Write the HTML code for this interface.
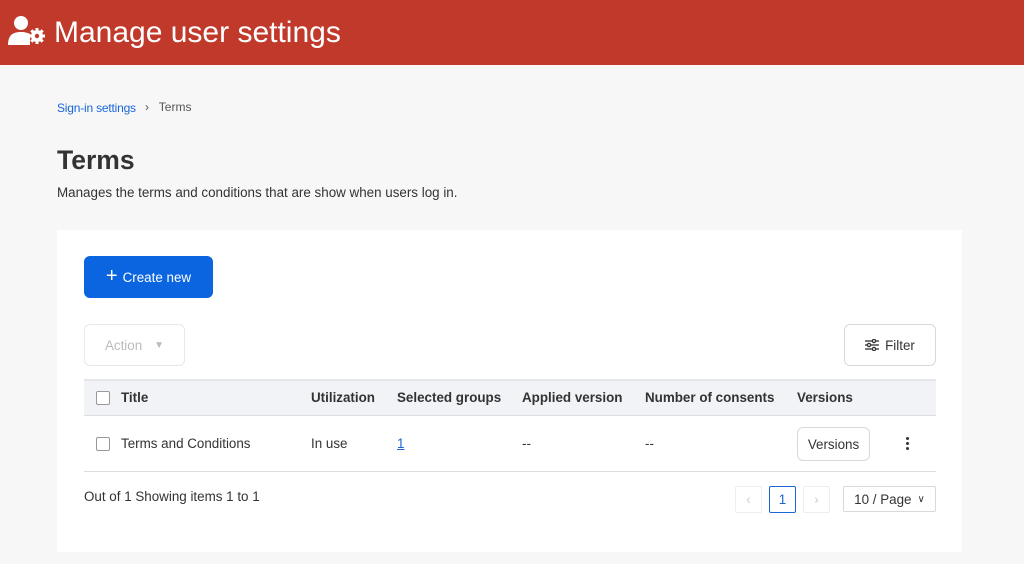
<!DOCTYPE html>
<html><head><style>
*{box-sizing:border-box;margin:0;padding:0}
body{width:1024px;height:564px;overflow:hidden;background:#f7f7f7;font-family:"Liberation Sans",Arial,sans-serif;color:#333;position:relative;font-size:13.4px}
.hdr{position:absolute;left:0;top:0;width:1024px;height:65px;background:#c0392b;color:#fff}
.hdr .t{position:absolute;left:54px;top:16px;font-size:30px}
.a{position:absolute;white-space:nowrap}
.card{position:absolute;left:57px;top:230px;width:905px;height:322px;background:#fff}
.btn{position:absolute;border:1px solid #d9d9d9;border-radius:6px;background:#fff;font-size:13.4px;display:flex;align-items:center;justify-content:center}
.cb{position:absolute;width:14px;height:14px;border:1px solid #999;border-radius:2px;background:#fff}
.h{font-weight:bold;font-size:13.4px;color:#333}
</style></head><body>
<div class="hdr">
<svg style="position:absolute;left:8px;top:15px" width="40" height="32" viewBox="0 0 40 32" fill="#fff">
<circle cx="13" cy="8" r="7"/><path d="M0 30 C0 20 5 17 13 17 C17 17 20 18 22 19 L22 30 Z"/>
<g transform="translate(29,21)"><circle r="6"/><g stroke="#fff" stroke-width="3"><line x1="0" y1="-8" x2="0" y2="8"/><line x1="-8" y1="0" x2="8" y2="0"/><line x1="-5.7" y1="-5.7" x2="5.7" y2="5.7"/><line x1="-5.7" y1="5.7" x2="5.7" y2="-5.7"/></g><circle r="2.2" fill="#c0392b"/></g>
</svg>
<div class="t">Manage user settings</div></div>
<div class="a" style="left:57px;top:101px;font-size:12px;color:#1a66d6;letter-spacing:-0.2px">Sign-in settings</div>
<div class="a" style="left:145px;top:100px;font-size:12px;color:#555">›&nbsp;&nbsp; Terms</div>
<div class="a" style="left:57px;top:145px;font-size:26.5px;font-weight:bold;color:#333">Terms</div>
<div class="a" style="left:57px;top:185px">Manages the terms and conditions that are show when users log in.</div>
<div class="card"></div>
<div class="btn" style="left:84px;top:256px;width:129px;height:42px;background:#0b64e0;border-color:#0b64e0;color:#fff"><span style="font-size:20px;margin-right:5px;margin-top:-2px">+</span>Create new</div>
<div class="btn" style="left:84px;top:324px;width:101px;height:42px;color:#bbb;border-color:#e8e8e8">Action <span style="font-size:10px;margin-left:12px">▼</span></div>
<div class="btn" style="left:844px;top:324px;width:92px;height:42px;color:#333">
<svg width="14" height="12" viewBox="0 0 14 12" style="margin-right:6px" stroke="#333" stroke-width="1.3" fill="#fff"><line x1="0" y1="2" x2="14" y2="2"/><line x1="0" y1="6" x2="14" y2="6"/><line x1="0" y1="10" x2="14" y2="10"/><circle cx="9" cy="2" r="1.6"/><circle cx="4" cy="6" r="1.6"/><circle cx="9" cy="10" r="1.6"/></svg>Filter</div>
<div class="a" style="left:84px;top:379px;width:852px;height:37px;background:#f1f3f6;border-top:2px solid #e3e5e8;border-bottom:1px solid #dcdde0"></div>
<div class="cb" style="left:96px;top:391px"></div>
<div class="a h" style="left:121px;top:390px">Title</div>
<div class="a h" style="left:311px;top:390px">Utilization</div>
<div class="a h" style="left:397px;top:390px">Selected groups</div>
<div class="a h" style="left:522px;top:390px">Applied version</div>
<div class="a h" style="left:645px;top:390px">Number of consents</div>
<div class="a h" style="left:797px;top:390px">Versions</div>
<div class="cb" style="left:96px;top:437px"></div>
<div class="a" style="left:121px;top:436px">Terms and Conditions</div>
<div class="a" style="left:311px;top:436px">In use</div>
<div class="a" style="left:397px;top:436px;color:#1a66d6;text-decoration:underline">1</div>
<div class="a" style="left:522px;top:436px">--</div>
<div class="a" style="left:645px;top:436px">--</div>
<div class="btn" style="left:797px;top:427px;width:73px;height:34px">Versions</div>
<div class="a" style="left:906px;top:437px;width:3px;height:3px;border-radius:50%;background:#333"></div>
<div class="a" style="left:906px;top:442px;width:3px;height:3px;border-radius:50%;background:#333"></div>
<div class="a" style="left:906px;top:447px;width:3px;height:3px;border-radius:50%;background:#333"></div>
<div class="a" style="left:84px;top:471px;width:852px;height:1px;background:#dcdde0"></div>
<div class="a" style="left:84px;top:489px">Out of 1 Showing items 1 to 1</div>
<div class="btn" style="left:735px;top:486px;width:27px;height:27px;color:#ccc;border-radius:2px;border-color:#eee">‹</div>
<div class="btn" style="left:769px;top:486px;width:27px;height:27px;color:#1a66d6;border-color:#1a66d6;border-radius:2px">1</div>
<div class="btn" style="left:803px;top:486px;width:27px;height:27px;color:#ccc;border-radius:2px;border-color:#eee">›</div>
<div class="btn" style="left:843px;top:486px;width:93px;height:26px;border-radius:2px">10 / Page <span style="font-size:10px;margin-left:6px">∨</span></div>
</body></html>
